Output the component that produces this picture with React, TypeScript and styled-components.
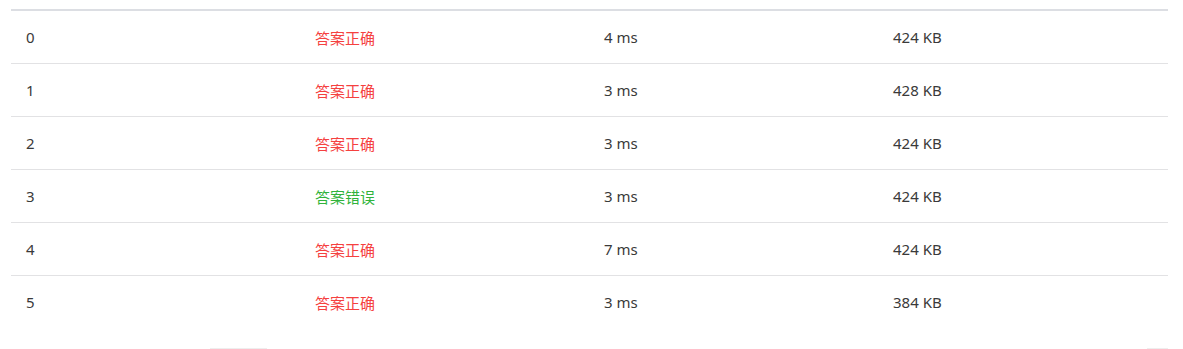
import React from "react";
import styled, { createGlobalStyle } from "styled-components";

const Global = createGlobalStyle`
  html, body { margin: 0; padding: 0; background: #fff; }
  body { font-family: "Noto Sans", "Noto Sans CJK SC", sans-serif; }
`;

const Page = styled.div`
  padding: 9px 15px 0 11px;
  width: 1157px;
`;

const Table = styled.div`
  border-top: 2px solid #dcdee3;
`;

const Row = styled.div`
  display: grid;
  grid-template-columns: repeat(4, 289px);
  height: 52px;
  align-items: center;
  border-bottom: 1px solid #e2e2e4;
  &:last-child { border-bottom: none; }
`;

const Cell = styled.div<{ $tone?: "ok" | "bad" }>`
  padding-left: 15px;
  font-size: 15px;
  color: ${(p) => (p.$tone === "ok" ? "#f5413f" : p.$tone === "bad" ? "#30b33b" : "#3a3a3a")};
  font-family: ${(p) => (p.$tone ? '"Noto Sans CJK SC", sans-serif' : '"Noto Sans", sans-serif')};
`;

const Footer = styled.div`
  display: flex;
  margin-top: 20px;
  height: 1px;
`;

const Seg = styled.div<{ $ml: number; $w: number }>`
  margin-left: ${(p) => p.$ml}px;
  width: ${(p) => p.$w}px;
  border-top: 1px solid #eeeeee;
`;

const rows = [
  { id: 0, ok: true, time: "4 ms", mem: "424 KB" },
  { id: 1, ok: true, time: "3 ms", mem: "428 KB" },
  { id: 2, ok: true, time: "3 ms", mem: "424 KB" },
  { id: 3, ok: false, time: "3 ms", mem: "424 KB" },
  { id: 4, ok: true, time: "7 ms", mem: "424 KB" },
  { id: 5, ok: true, time: "3 ms", mem: "384 KB" },
];

export default function App() {
  return (
    <Page>
      <Global />
      <Table>
        {rows.map((r) => (
          <Row key={r.id}>
            <Cell>{r.id}</Cell>
            <Cell $tone={r.ok ? "ok" : "bad"}>{r.ok ? "答案正确" : "答案错误"}</Cell>
            <Cell>{r.time}</Cell>
            <Cell>{r.mem}</Cell>
          </Row>
        ))}
      </Table>
      <Footer>
        <Seg $ml={199} $w={57} />
        <Seg $ml={880} $w={21} />
      </Footer>
    </Page>
  );
}
